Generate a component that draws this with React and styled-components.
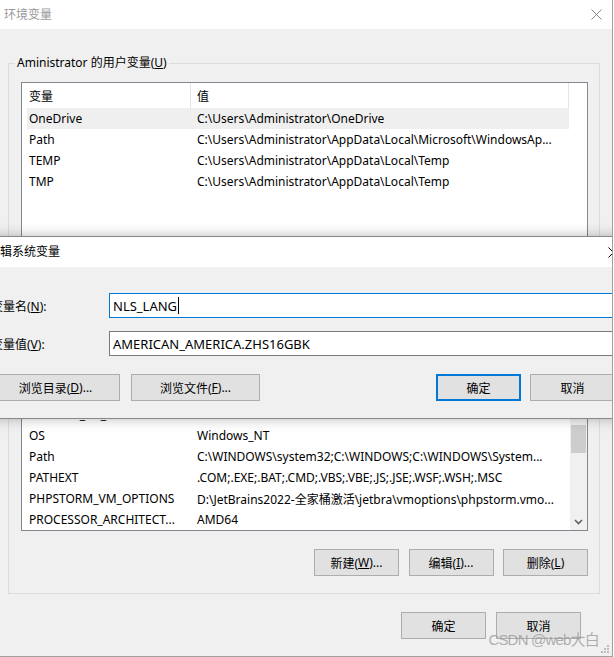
import React from 'react';
import styled, { createGlobalStyle } from 'styled-components';

const GlobalStyle = createGlobalStyle`
  html, body {
    margin: 0;
    padding: 0;
    background: #ffffff;
  }
  body {
    font-family: "Noto Sans", "Noto Sans CJK SC", sans-serif;
    font-size: 12px;
    color: #000;
  }
  * {
    box-sizing: border-box;
  }
`;

const Window = styled.div`
  position: relative;
  width: 613px;
  height: 657px;
  background: #f0f0f0;
  border-right: 1px solid #a0a0a0;
  border-bottom: 1px solid #a0a0a0;
  overflow: hidden;
  display: flex;
  flex-direction: column;
`;

const TitleBar = styled.div`
  height: 29px;
  flex-shrink: 0;
  background: #ffffff;
  display: flex;
  align-items: center;
  justify-content: space-between;
  padding: 0 ${(p) => p.$right}px 0 ${(p) => p.$left}px;
  color: ${(p) => (p.$active ? '#000' : '#999')};
  line-height: 16px;
`;

const Content = styled.div`
  flex: 1;
  padding: 25px 12px 0 8px;
  display: flex;
  flex-direction: column;
`;

const Group = styled.fieldset`
  margin: ${(p) => p.$mt}px 0 0 0;
  padding: 10px 11px ${(p) => p.$pb}px 12px;
  border: 1px solid #dcdcdc;
  min-width: 0;
`;

const Legend = styled.legend`
  margin-left: -6px;
  padding: 0 2px;
  line-height: 18px;
  height: 18px;
`;

const ListView = styled.div`
  height: ${(p) => p.$h}px;
  background: #ffffff;
  border: 1px solid #828790;
  display: flex;
  overflow: hidden;
`;

const ListBody = styled.div`
  flex: 1;
  padding-left: 5px;
  display: flex;
  flex-direction: column;
  overflow: hidden;
`;

const HeaderRow = styled.div`
  height: 25px;
  flex-shrink: 0;
  display: flex;
`;

const HeadCell = styled.div`
  width: ${(p) => p.$w}px;
  padding-left: ${(p) => p.$pl}px;
  border-right: 1px solid #e5e5e5;
  display: flex;
  align-items: center;
`;

const Row = styled.div`
  height: 21px;
  flex-shrink: 0;
  width: 542px;
  display: flex;
  align-items: center;
  background: ${(p) => (p.$selected ? '#efefef' : 'transparent')};
`;

const Cell = styled.div`
  width: ${(p) => p.$w}px;
  padding-left: ${(p) => p.$pl}px;
  white-space: nowrap;
  overflow: hidden;
`;

const ScrollBar = styled.div`
  width: 17px;
  background: #f0f0f0;
  display: flex;
  flex-direction: column;
`;

const ScrollArrow = styled.div`
  height: 17px;
  display: flex;
  align-items: center;
  justify-content: center;
`;

const ScrollTrack = styled.div`
  flex: 1;
`;

const Thumb = styled.div`
  margin: ${(p) => p.$top}px 1px 0 1px;
  height: ${(p) => p.$h}px;
  background: #cdcdcd;
`;

const ButtonRow = styled.div`
  display: flex;
  justify-content: flex-end;
  gap: ${(p) => p.$gap}px;
  margin-top: ${(p) => p.$mt}px;
  padding-right: ${(p) => p.$pr || 0}px;
`;

const Button = styled.div`
  width: ${(p) => p.$w || 85}px;
  height: 27px;
  background: #e1e1e1;
  border: ${(p) => (p.$default ? '2px solid #0078d7' : '1px solid #adadad')};
  display: flex;
  align-items: center;
  justify-content: center;
  white-space: nowrap;
`;

const Dialog = styled.div`
  position: absolute;
  left: -21px;
  top: 236px;
  width: 658px;
  height: 183px;
  border: 1px solid #888888;
  background: #f0f0f0;
  box-shadow: 0 0 12px rgba(0, 0, 0, 0.28);
  display: flex;
  flex-direction: column;
`;

const DialogTitle = styled(TitleBar)`
  height: 30px;
`;

const DialogBody = styled.div`
  flex: 1;
  padding: 26px 21px 17px 11px;
  display: flex;
  flex-direction: column;
`;

const FieldRow = styled.div`
  height: 25px;
  display: flex;
  align-items: center;
  margin-bottom: ${(p) => p.$mb || 0}px;
`;

const FieldLabel = styled.div`
  width: 118px;
  flex-shrink: 0;
`;

const TextBox = styled.div`
  flex: 1;
  height: 25px;
  background: #ffffff;
  border: 1px solid ${(p) => (p.$focused ? '#0078d7' : '#7a7a7a')};
  padding-left: 3px;
  display: flex;
  align-items: center;
  white-space: nowrap;
  font-size: 13px;
`;

const Caret = styled.span`
  display: inline-block;
  width: 1px;
  height: 17px;
  margin-left: 1px;
  background: #000;
`;

const DialogButtons = styled.div`
  margin-top: 18px;
  display: flex;
  justify-content: space-between;
`;

const ButtonGroup = styled.div`
  display: flex;
  gap: ${(p) => p.$gap}px;
`;

const Watermark = styled.div`
  position: absolute;
  right: 13px;
  bottom: 9px;
  font-family: "Liberation Sans", "Noto Sans CJK SC", sans-serif;
  font-size: 15px;
  line-height: 15px;
  letter-spacing: -0.8px;
  color: rgba(150, 150, 150, 0.75);
  pointer-events: none;
`;

const Grip = styled.svg`
  position: absolute;
  right: 3px;
  bottom: 3px;
`;

const CloseIcon = ({ color }) => (
  <svg width="11" height="11" viewBox="0 0 11 11">
    <path d="M0.5 0.5 L10.5 10.5 M10.5 0.5 L0.5 10.5" stroke={color} strokeWidth="1" fill="none" />
  </svg>
);

const Chevron = ({ up }) => (
  <svg width="9" height="6" viewBox="0 0 9 6">
    <path
      d={up ? 'M1 5 L4.5 1.5 L8 5' : 'M1 1 L4.5 4.5 L8 1'}
      stroke="#606060"
      strokeWidth="1.6"
      fill="none"
    />
  </svg>
);

const userVars = [
  ['OneDrive', 'C:\\Users\\Administrator\\OneDrive'],
  ['Path', 'C:\\Users\\Administrator\\AppData\\Local\\Microsoft\\WindowsAp...'],
  ['TEMP', 'C:\\Users\\Administrator\\AppData\\Local\\Temp'],
  ['TMP', 'C:\\Users\\Administrator\\AppData\\Local\\Temp'],
];

const systemVars = [
  ['ComSpec', 'C:\\WINDOWS\\system32\\cmd.exe'],
  ['DriverData', 'C:\\Windows\\System32\\Drivers\\DriverData'],
  ['NLS_LANG', 'AMERICAN_AMERICA.ZHS16GBK'],
  ['NUMBER_OF_PROCESSORS', '8'],
  ['OS', 'Windows_NT'],
  ['Path', 'C:\\WINDOWS\\system32;C:\\WINDOWS;C:\\WINDOWS\\System...'],
  ['PATHEXT', '.COM;.EXE;.BAT;.CMD;.VBS;.VBE;.JS;.JSE;.WSF;.WSH;.MSC'],
  ['PHPSTORM_VM_OPTIONS', 'D:\\JetBrains2022-全家桶激活\\jetbra\\vmoptions\\phpstorm.vmo...'],
  ['PROCESSOR_ARCHITECT...', 'AMD64'],
];

const VarList = ({ rows, height, selected, scroll }) => (
  <ListView $h={height}>
    <ListBody>
      <HeaderRow>
        <HeadCell $w={164} $pl={2}>变量</HeadCell>
        <HeadCell $w={378} $pl={6}>值</HeadCell>
      </HeaderRow>
      {rows.map(([name, value], i) => (
        <Row key={name + i} $selected={i === selected}>
          <Cell $w={164} $pl={2}>{name}</Cell>
          <Cell $w={378} $pl={6}>{value}</Cell>
        </Row>
      ))}
    </ListBody>
    {scroll && (
      <ScrollBar>
        <ScrollArrow>
          <Chevron up />
        </ScrollArrow>
        <ScrollTrack>
          <Thumb $top={scroll.top} $h={scroll.height} />
        </ScrollTrack>
        <ScrollArrow>
          <Chevron />
        </ScrollArrow>
      </ScrollBar>
    )}
  </ListView>
);

function App() {
  return (
    <>
      <GlobalStyle />
      <Window>
        <TitleBar $left={4} $right={10}>
          <span>环境变量</span>
          <CloseIcon color="#8a8a8a" />
        </TitleBar>
        <Content>
          <Group $mt={0} $pb={8}>
            <Legend>Aministrator 的用户变量(<u>U</u>)</Legend>
            <VarList rows={userVars} height={158} selected={0} />
            <ButtonRow $gap={9.5} $mt={7}>
              <Button>新建(<u>N</u>)...</Button>
              <Button>编辑(<u>E</u>)...</Button>
              <Button>删除(<u>D</u>)</Button>
            </ButtonRow>
          </Group>
          <Group $mt={4} $pb={17}>
            <Legend>系统变量(<u>S</u>)</Legend>
            <VarList rows={systemVars} height={216} selected={-1} scroll={{ top: 92, height: 28 }} />
            <ButtonRow $gap={9.5} $mt={18}>
              <Button>新建(<u>W</u>)...</Button>
              <Button>编辑(<u>I</u>)...</Button>
              <Button>删除(<u>L</u>)</Button>
            </ButtonRow>
          </Group>
          <ButtonRow $gap={10} $mt={18} $pr={19}>
            <Button>确定</Button>
            <Button>取消</Button>
          </ButtonRow>
        </Content>

        <Dialog>
          <DialogTitle $left={8} $right={17} $active>
            <span>编辑系统变量</span>
            <CloseIcon color="#000" />
          </DialogTitle>
          <DialogBody>
            <FieldRow $mb={13}>
              <FieldLabel>变量名(<u>N</u>):</FieldLabel>
              <TextBox $focused>
                NLS_LANG
                <Caret />
              </TextBox>
            </FieldRow>
            <FieldRow>
              <FieldLabel>变量值(<u>V</u>):</FieldLabel>
              <TextBox>AMERICAN_AMERICA.ZHS16GBK</TextBox>
            </FieldRow>
            <DialogButtons>
              <ButtonGroup $gap={11}>
                <Button $w={129}>浏览目录(<u>D</u>)...</Button>
                <Button $w={129}>浏览文件(<u>F</u>)...</Button>
              </ButtonGroup>
              <ButtonGroup $gap={9}>
                <Button $default>确定</Button>
                <Button>取消</Button>
              </ButtonGroup>
            </DialogButtons>
          </DialogBody>
        </Dialog>

        <Watermark>CSDN @web大白</Watermark>
        <Grip width="8" height="8" viewBox="0 0 8 8">
          <rect x="6" y="0" width="2" height="2" fill="#bcbcbc" />
          <rect x="3" y="3" width="2" height="2" fill="#bcbcbc" />
          <rect x="6" y="3" width="2" height="2" fill="#bcbcbc" />
          <rect x="0" y="6" width="2" height="2" fill="#bcbcbc" />
          <rect x="3" y="6" width="2" height="2" fill="#bcbcbc" />
          <rect x="6" y="6" width="2" height="2" fill="#bcbcbc" />
        </Grip>
      </Window>
    </>
  );
}

export default App;
